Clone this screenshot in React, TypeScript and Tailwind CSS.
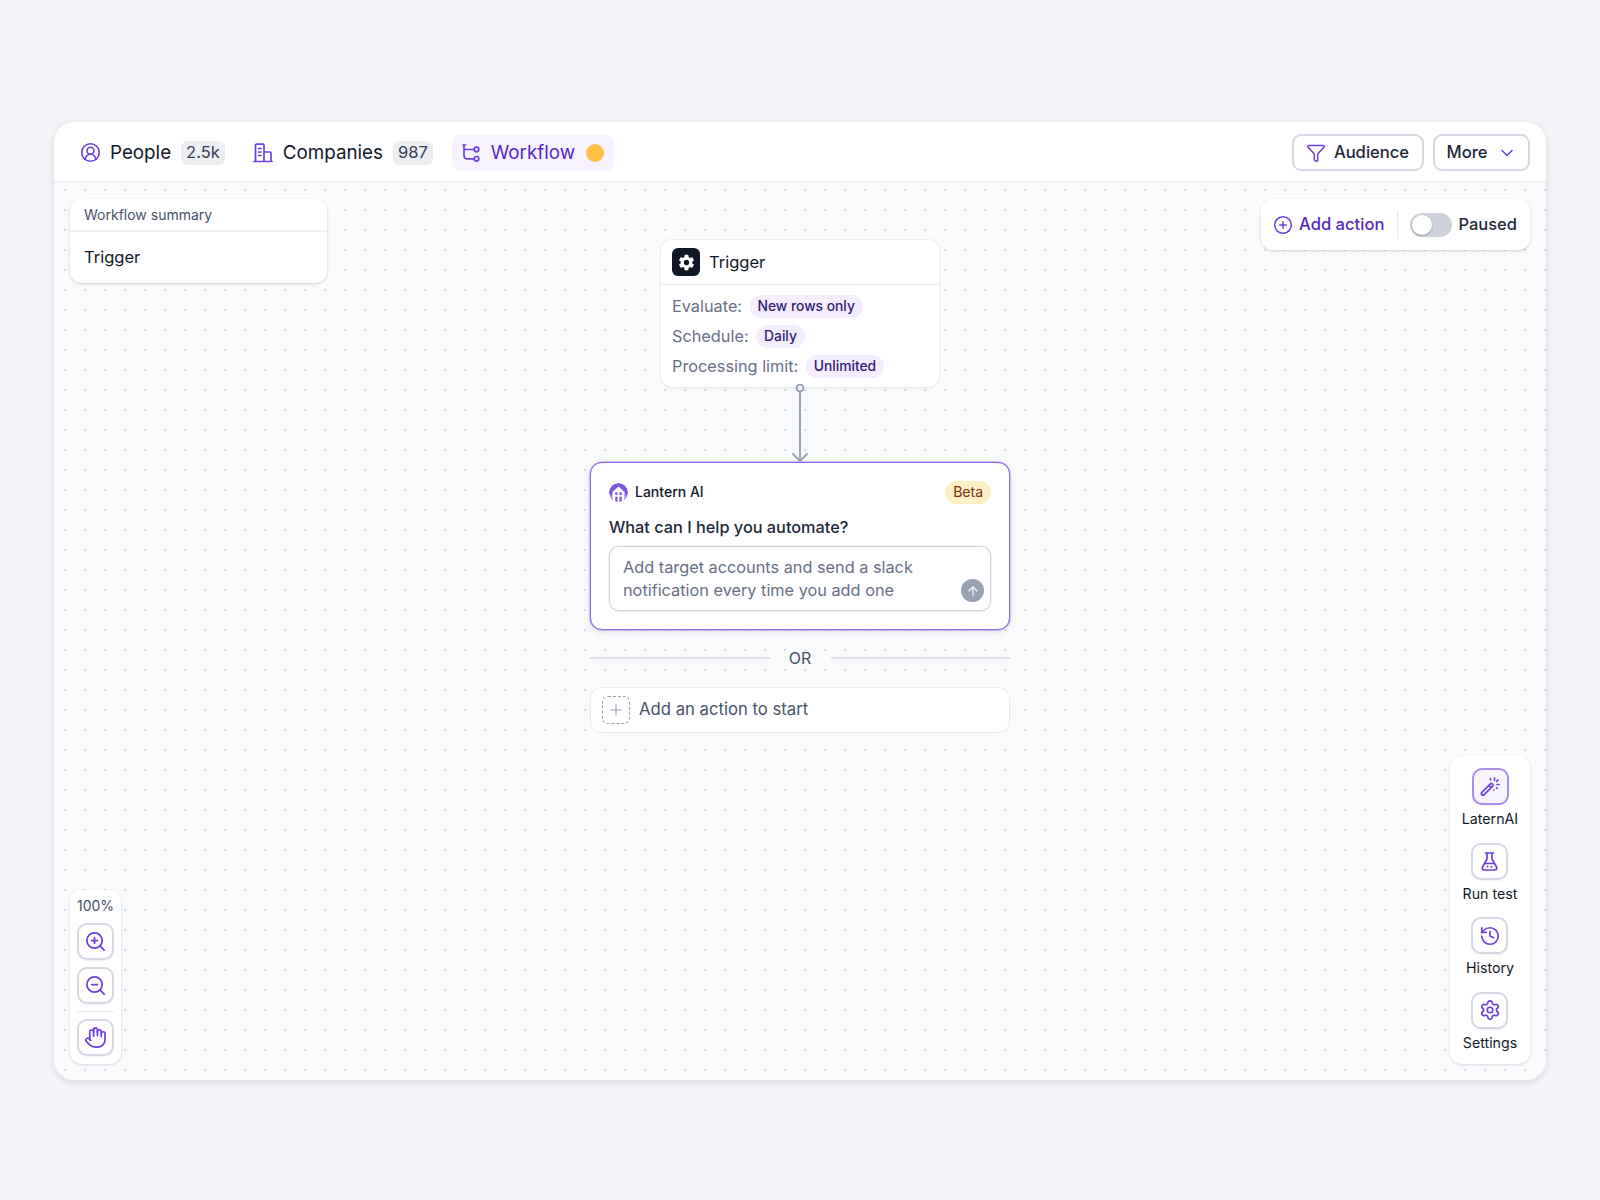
import { ChevronDown, CirclePlus, CircleUserRound, Funnel, Hand, History, Plus, Settings, ZoomIn, ZoomOut, ArrowUp } from "lucide-react";
import { IoSettingsSharp } from "react-icons/io5";
import type { ReactNode } from "react";

const purple = "text-[#6d3fdc]";

function BuildingIcon() {
  return (
    <svg width="20" height="20" viewBox="0 0 20 20" fill="none" stroke="currentColor" strokeWidth="1.7" strokeLinecap="round" strokeLinejoin="round" className={purple}>
      <path d="M1 18.5h18M2.5 18.5V2.2a1 1 0 0 1 1-1h6.5a1 1 0 0 1 1 1v16.3M11 9h6a1 1 0 0 1 1 1v8.5M5.5 5.5h2.5M5.5 9h2.5M5.5 12.5h2.5" />
    </svg>
  );
}

function WorkflowIcon() {
  return (
    <svg width="20" height="20" viewBox="0 0 20 20" fill="none" stroke="currentColor" strokeWidth="1.7" strokeLinecap="round" strokeLinejoin="round" className={purple}>
      <path d="M1 2h2.5M2 2v10.8a3 3 0 0 0 3 3h7.2M2 6.5h10.2" />
      <circle cx="14.5" cy="6.5" r="2.3" />
      <circle cx="14.5" cy="15.8" r="2.3" />
    </svg>
  );
}

function WandIcon() {
  return (
    <svg width="22" height="22" viewBox="0 0 22 22" fill="none" stroke="currentColor" strokeWidth="1.7" strokeLinecap="round" strokeLinejoin="round" className="text-[#6d3fdc]">
      <path d="M2.6 16.6 11.4 7.8a1.2 1.2 0 0 1 1.7 0l.6.6a1.2 1.2 0 0 1 0 1.7l-8.8 8.8a1.2 1.2 0 0 1-1.7 0l-.6-.6a1.2 1.2 0 0 1 0-1.7ZM9.8 9.4l2.3 2.3" />
      <path d="M11.5 2.5v1.2M15.5 2v2.2M19 4l-1.4 1.4M18 8.5h2M17.6 12.2h.6M14.8 14h.01" />
    </svg>
  );
}

function FlaskIcon() {
  return (
    <svg width="21" height="21" viewBox="0 0 21 21" fill="none" stroke="currentColor" strokeWidth="1.7" strokeLinecap="round" strokeLinejoin="round" className="text-[#6d3fdc]">
      <path d="M6.5 2h8M8 2v6L3.4 16.2A1.9 1.9 0 0 0 5 19h11a1.9 1.9 0 0 0 1.6-2.8L13 8V2M5.8 12.5h9.4" />
      <path d="M8.6 15.4h.01M12.4 15.8h.01" strokeWidth="2" />
    </svg>
  );
}

function LanternLogo() {
  return (
    <svg width="19" height="19" viewBox="0 0 18 18">
      <defs>
        <clipPath id="lantern-clip"><circle cx="9" cy="9" r="9" /></clipPath>
      </defs>
      <g clipPath="url(#lantern-clip)">
        <circle cx="9" cy="9" r="9" fill="#7f55e3" />
        <path d="M3.2 8.6 9 3.2l5.8 5.4V18H3.2Z" fill="#ffffff" />
        <path d="M0 11.5h3.2V18H0ZM14.8 11.5H18V18h-3.2Z" fill="#b39cf2" />
        <rect x="5.9" y="8.8" width="2.2" height="2.6" fill="#7f55e3" />
        <rect x="9.9" y="8.8" width="2.2" height="2.6" fill="#7f55e3" />
        <rect x="5.9" y="13" width="2.2" height="5" fill="#7f55e3" />
        <rect x="9.9" y="13" width="2.2" height="5" fill="#7f55e3" />
      </g>
    </svg>
  );
}

function Badge({ children }: { children: ReactNode }) {
  return <span className="flex h-6 items-center rounded-md bg-[#eceef2] px-[5px] text-[16.5px] leading-none text-[#344054]">{children}</span>;
}

function Pill({ children }: { children: ReactNode }) {
  return <span className="flex h-[23px] items-center rounded-full bg-[#f3edfd] px-2 text-[13.8px] font-[450] text-[#32197a]">{children}</span>;
}

function Row({ label, value }: { label: string; value: string }) {
  return (
    <div className="flex h-[30px] items-center gap-[7.5px]">
      <span className="text-[16.3px] text-[#667085]">{label}</span>
      <Pill>{value}</Pill>
    </div>
  );
}

function ToolButton({ children, active }: { children: ReactNode; active?: boolean }) {
  return (
    <button className={`flex size-[37px] items-center justify-center rounded-[10px] border-2 ${active ? "border-[#a98cf0] bg-[#f7f4fe]" : "border-[#d4d8e2] bg-white"} ${purple} shadow-[0_1px_2px_rgba(16,24,40,0.06)]`}>
      {children}
    </button>
  );
}

function SideTool({ label, icon, active }: { label: string; icon: ReactNode; active?: boolean }) {
  return (
    <div className="flex shrink-0 flex-col items-center">
      <ToolButton active={active}>{icon}</ToolButton>
      <span className="mt-[4px] text-[14.2px] leading-5 text-[#101828]">{label}</span>
    </div>
  );
}

export default function App() {
  return (
    <div className="min-h-[1200px] bg-[#f2f4f8] px-[54px] pt-[122px] font-['Inter',sans-serif]">
      <div className="flex h-[958px] flex-col overflow-hidden rounded-[20px] bg-white shadow-[0_2px_6px_rgba(16,24,40,0.12)]">
        <header className="flex h-[61px] shrink-0 items-center border-b-2 border-[#eef0f4] pt-[2px] pr-[16px] pl-[26px]">
          <div className="flex items-center">
            <CircleUserRound size={21} strokeWidth={1.8} className={purple} />
            <span className="ml-[9px] pt-[2px] text-[18.8px] text-[#101828]">People</span>
            <span className="ml-[10px]"><Badge>2.5k</Badge></span>
            <span className="ml-[28px]"><BuildingIcon /></span>
            <span className="ml-[10px] pt-[2px] text-[18.8px] text-[#101828]">Companies</span>
            <span className="ml-[10px]"><Badge>987</Badge></span>
            <div className="ml-[19px] flex h-9 w-[162px] items-center rounded-lg bg-[#f6f3fe] pl-[10px]">
              <WorkflowIcon />
              <span className="ml-[9px] pt-[2px] text-[18.8px] text-[#5726c4]">Workflow</span>
              <span className="ml-[11px] size-[18px] rounded-full bg-[#fdbf47]" />
            </div>
          </div>
          <div className="ml-auto flex items-center gap-[9px]">
            <button className="flex h-[37px] w-[132px] items-center justify-center gap-[8px] rounded-[9px] border-2 border-[#d4d8e2] bg-white pr-[1px] text-[16.6px] font-medium text-[#1d2939]">
              <Funnel size={20} strokeWidth={1.8} className={purple} />
              Audience
            </button>
            <button className="flex h-[37px] w-[97px] items-center justify-center gap-[9px] rounded-[9px] border-2 border-[#d4d8e2] bg-white text-[16.6px] font-medium text-[#1d2939]">
              More
              <ChevronDown size={20} strokeWidth={1.8} className={purple} />
            </button>
          </div>
        </header>

        <main className="relative flex flex-1 flex-col items-center bg-[#f9fafc] bg-[radial-gradient(circle,#d5d9e2_0.8px,transparent_1px)] bg-size-[20px_20px] bg-position-[1px_-3px] pt-[56px]">
          <section className="w-[280px] rounded-xl border border-[#e8eaf0] bg-white shadow-[0_1px_2px_rgba(16,24,40,0.05)]">
            <div className="flex h-[45px] items-center gap-[9px] border-b border-[#e8eaf0] px-[11px]">
              <span className="flex size-7 items-center justify-center rounded-md bg-[#101828] text-white">
                <IoSettingsSharp size={17} />
              </span>
              <span className="text-[16.5px] text-[#101828]">Trigger</span>
            </div>
            <div className="px-[11px] pt-[6px] pb-[6px]">
              <Row label="Evaluate:" value="New rows only" />
              <Row label="Schedule:" value="Daily" />
              <Row label="Processing limit:" value="Unlimited" />
            </div>
          </section>

          <svg width="16" height="78" viewBox="0 0 16 78" fill="none" stroke="#98a2b3" strokeWidth="2" strokeLinecap="round" strokeLinejoin="round" className="-mt-[4px] shrink-0">
            <circle cx="8" cy="4" r="3.4" />
            <path d="M8 7.5V77M1 70l7 7 7-7" />
          </svg>

          <section className="flex h-[168px] w-[420px] shrink-0 flex-col rounded-xl border border-[#8f69e6] bg-white px-[18px] shadow-[0_0_0_0.5px_#a98cf0,0_2px_6px_rgba(16,24,40,0.12)]">
            <div className="mt-[17px] flex h-[24px] items-center">
              <LanternLogo />
              <span className="ml-[7px] text-sm font-medium text-[#101828]">Lantern AI</span>
              <span className="ml-auto flex h-[23px] items-center rounded-full bg-[#fdf0c4] px-2 text-sm text-[#7a2e0e]">Beta</span>
            </div>
            <p className="mt-[11px] text-[16.3px] leading-6 font-[450] text-[#1d2939]">What can I help you automate?</p>
            <div className="relative mt-[7px] h-[65px] rounded-[10px] border border-[#d0d5dd] px-[13px] pt-[8.5px] text-[16.3px] leading-[23.4px] text-[#667085] shadow-[0_0_0_0.5px_#dcdfe6]">
              Add target accounts and send a slack<br />notification every time you add one
              <span className="absolute right-[6px] bottom-[8px] flex size-[23px] items-center justify-center rounded-full bg-[#98a2b3] text-white">
                <ArrowUp size={14} strokeWidth={2} />
              </span>
            </div>
          </section>

          <div className="mt-[15.5px] flex h-[24px] w-[420px] items-center text-base text-[#475467]">
            <span className="h-[2px] flex-1 bg-[#dfe2e8]" />
            <span className="w-[61px] text-center">OR</span>
            <span className="h-[2px] flex-1 bg-[#dfe2e8]" />
          </div>

          <div className="mt-[17px] flex h-[46px] w-[420px] items-center rounded-xl border border-[#e8eaf0] bg-white pl-[11px]">
            <span className="flex size-7 items-center justify-center rounded-md border border-dashed border-[#98a2b3] text-[#98a2b3]">
              <Plus size={18} strokeWidth={1.5} />
            </span>
            <span className="ml-[9px] text-[16.7px] text-[#475467]">Add an action to start</span>
          </div>

          <aside className="absolute top-[16px] left-[16px] w-[257px] rounded-xl bg-white shadow-[0_1px_3px_rgba(16,24,40,0.18)]">
            <div className="flex h-[33px] items-center border-b-2 border-[#eef0f4] pl-[14px] text-sm text-[#475467]">Workflow summary</div>
            <div className="flex h-[51px] items-center pl-[14px] text-[16.5px] text-[#101828]">Trigger</div>
          </aside>

          <aside className="absolute top-[16px] right-[16px] flex h-[51px] w-[269px] items-center rounded-xl bg-white pl-[12px] shadow-[0_1px_3px_rgba(16,24,40,0.18)]">
            <CirclePlus size={20} strokeWidth={1.8} className={purple} />
            <span className="ml-[6px] text-[16.6px] font-medium text-[#5726c4]">Add action</span>
            <span className="ml-[13px] h-7 w-px bg-[#e4e7ec]" />
            <span className="ml-[12px] flex h-6 w-[42px] items-center rounded-full bg-[#cdd1da] pl-[2px]">
              <span className="size-5 rounded-full bg-white shadow-[0_1px_2px_rgba(16,24,40,0.3)]" />
            </span>
            <span className="ml-[6px] text-[16.5px] font-medium text-[#1d2939]">Paused</span>
          </aside>

          <aside className="absolute bottom-[16px] left-[16px] flex h-[174px] w-[51px] flex-col items-center rounded-xl bg-white shadow-[0_1px_3px_rgba(16,24,40,0.15)]">
            <span className="mt-[7px] mb-[8px] text-sm leading-[18px] text-[#475467]">100%</span>
            <ToolButton><ZoomIn size={23} strokeWidth={1.8} /></ToolButton>
            <span className="h-[7px]" />
            <ToolButton><ZoomOut size={23} strokeWidth={1.8} /></ToolButton>
            <span className="mt-[7px] mb-[7px] h-px w-[37px] bg-[#e4e7ec]" />
            <ToolButton><Hand size={23} strokeWidth={1.8} /></ToolButton>
          </aside>

          <aside className="absolute right-[16px] bottom-[16px] flex h-[308px] w-[80px] flex-col items-center gap-[13.67px] rounded-xl bg-white pt-[12px] shadow-[0_1px_3px_rgba(16,24,40,0.15)]">
            <SideTool active label="LaternAI" icon={<WandIcon />} />
            <SideTool label="Run test" icon={<FlaskIcon />} />
            <SideTool label="History" icon={<History size={22} strokeWidth={1.8} />} />
            <SideTool label="Settings" icon={<Settings size={22} strokeWidth={1.8} />} />
          </aside>
        </main>
      </div>
    </div>
  );
}
